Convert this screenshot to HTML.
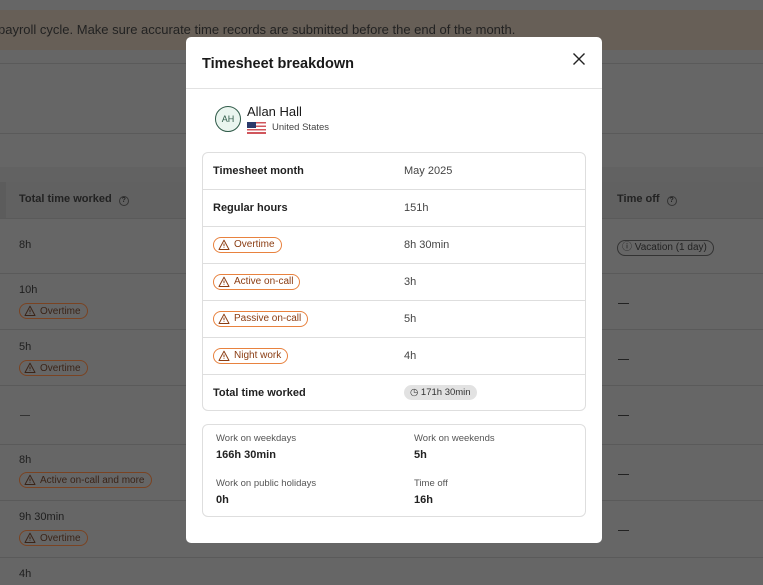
<!DOCTYPE html>
<html><head><meta charset="utf-8"><style>
*{box-sizing:border-box;margin:0;padding:0}
body{width:763px;height:585px;overflow:hidden;background:#666;font-family:"Liberation Sans",sans-serif;position:relative;color:#1a1a1a}
.abs{position:absolute}
.line{position:absolute;left:0;width:763px;height:1px;background:#5a5a5a}
.bg{color:#1e1e1e;font-size:11px}
.badge{display:inline-flex;align-items:center;gap:4px;border:1px solid #e8823f;border-radius:9px;height:16px;line-height:14px;padding:1px 6px 0 4px;font-size:10px;font-weight:normal;color:#8a3c12;background:#fff;white-space:nowrap}
.badge svg{flex:none;margin-top:-1px}
.bbg{background:transparent;border-color:#7a4322;color:#3a2418}
.modal{position:absolute;left:186px;top:37px;width:416px;height:506px;background:#fff;border-radius:5px}
.tbl{position:absolute;left:16px;top:115px;width:384px;border:1px solid #dedede;border-radius:6px}
.row{height:37px;border-top:1px solid #dedede;display:flex;align-items:center;font-size:11px}
.row:first-child{border-top:none;height:36px}
.row .l{width:201px;padding-left:10px;font-weight:bold;color:#222}
.row .v{color:#444}
.sum{position:absolute;left:16px;top:387px;width:384px;height:93px;border:1px solid #dedede;border-radius:6px;font-size:9.5px}
.sum .lab{position:absolute;color:#555}
.sum .val{position:absolute;font-weight:bold;font-size:11px;color:#222}
</style></head><body>
<svg width="0" height="0" style="position:absolute"><defs><symbol id="w" viewBox="0 0 12 12"><path d="M6 1.2L11 10.5H1Z" fill="none" stroke="currentColor" stroke-width="1" stroke-linejoin="round"/><path d="M6 4.5V7.3M6 8.4V9" stroke="currentColor" stroke-width="1"/></symbol></defs></svg>
<div class="abs" style="left:0;top:10px;width:763px;height:40px;background:#675f57"></div>
<div class="abs bg" style="left:-2px;top:22px;font-size:13px;color:#222">payroll cycle. Make sure accurate time records are submitted before the end of the month.</div>
<div class="line" style="top:63px"></div>
<div class="line" style="top:133px"></div>
<div class="abs" style="left:0;top:167px;width:763px;height:15px;background:#626262"></div>
<div class="abs" style="left:0;top:182px;width:763px;height:36px;background:#616161"></div>
<div class="abs" style="left:0;top:182px;width:6px;height:36px;background:#5c5c5c"></div>
<div class="line" style="top:218px"></div>
<div class="abs bg" style="left:19px;top:193px;font-weight:bold;color:#222">Total time worked <span style="display:inline-block;width:10px;height:10px;border:1px solid #333;border-radius:50%;font-size:7px;text-align:center;line-height:8px;margin-left:4px">?</span></div>
<div class="abs bg" style="left:617px;top:193px;font-weight:bold;color:#222">Time off <span style="display:inline-block;width:10px;height:10px;border:1px solid #333;border-radius:50%;font-size:7px;text-align:center;line-height:8px;margin-left:4px">?</span></div>
<div class="line" style="top:273px"></div><div class="line" style="top:329px"></div><div class="line" style="top:385px"></div><div class="line" style="top:444px"></div><div class="line" style="top:500px"></div><div class="line" style="top:557px"></div>
<div class="abs bg" style="left:19px;top:239px">8h</div>
<div class="abs bg" style="left:19px;top:284px">10h</div>
<div class="abs" style="left:19px;top:303px"><span class="badge bbg"><svg width="12" height="12"><use href="#w"/></svg>Overtime</span></div>
<div class="abs bg" style="left:19px;top:341px">5h</div>
<div class="abs" style="left:19px;top:360px"><span class="badge bbg"><svg width="12" height="12"><use href="#w"/></svg>Overtime</span></div>
<div class="abs" style="left:20px;top:415px;width:10px;height:1px;background:#333"></div>
<div class="abs bg" style="left:19px;top:454px">8h</div>
<div class="abs" style="left:19px;top:472px"><span class="badge bbg"><svg width="12" height="12"><use href="#w"/></svg>Active on-call and more</span></div>
<div class="abs bg" style="left:19px;top:511px">9h 30min</div>
<div class="abs" style="left:19px;top:530px"><span class="badge bbg"><svg width="12" height="12"><use href="#w"/></svg>Overtime</span></div>
<div class="abs bg" style="left:19px;top:568px">4h</div>
<div class="abs" style="left:617px;top:237px"><span class="badge bbg" style="border-color:#333;color:#222">ⓘ Vacation (1 day)</span></div>
<div class="abs" style="left:618px;top:303px;width:11px;height:1px;background:#222"></div>
<div class="abs" style="left:618px;top:359px;width:11px;height:1px;background:#222"></div>
<div class="abs" style="left:618px;top:415px;width:11px;height:1px;background:#222"></div>
<div class="abs" style="left:618px;top:474px;width:11px;height:1px;background:#222"></div>
<div class="abs" style="left:618px;top:530px;width:11px;height:1px;background:#222"></div>

<div class="modal">
 <div class="abs" style="left:16px;top:19px;font-size:14.5px;font-weight:bold;color:#1a1a1a">Timesheet breakdown</div>
 <svg class="abs" style="left:387px;top:16px" width="12" height="12" viewBox="0 0 12 12"><path d="M0.5 0.5L11.5 11.5M11.5 0.5L0.5 11.5" stroke="#222" stroke-width="1.4"/></svg>
 <div class="abs" style="left:0;top:51px;width:416px;height:1px;background:#e2e2e2"></div>
 <div class="abs" style="left:29px;top:69px;width:26px;height:26px;border:1px solid #2f5a48;border-radius:50%;background:#eaf5ef;font-size:9px;color:#2f5a48;text-align:center;line-height:24px">AH</div>
 <div class="abs" style="left:61px;top:67px;font-size:13px;color:#1a1a1a">Allan Hall</div>
 <div class="abs" style="left:61px;top:85px;width:19px;height:12px;background:repeating-linear-gradient(#d0565c 0 1.7px,#fff 1.7px 3.4px)"><div style="width:9px;height:6px;background:#2b3a6b"></div></div>
 <div class="abs" style="left:86px;top:85px;font-size:9.5px;color:#444">United States</div>
 <div class="tbl">
  <div class="row"><div class="l">Timesheet month</div><div class="v">May 2025</div></div>
  <div class="row"><div class="l">Regular hours</div><div class="v">151h</div></div>
  <div class="row"><div class="l"><span class="badge"><svg width="12" height="12"><use href="#w"/></svg>Overtime</span></div><div class="v">8h 30min</div></div>
  <div class="row"><div class="l"><span class="badge"><svg width="12" height="12"><use href="#w"/></svg>Active on-call</span></div><div class="v">3h</div></div>
  <div class="row"><div class="l"><span class="badge"><svg width="12" height="12"><use href="#w"/></svg>Passive on-call</span></div><div class="v">5h</div></div>
  <div class="row"><div class="l"><span class="badge"><svg width="12" height="12"><use href="#w"/></svg>Night work</span></div><div class="v">4h</div></div>
  <div class="row" style="height:36px"><div class="l">Total time worked</div><div class="v"><span style="display:inline-block;background:#e2e2e2;border-radius:8px;padding:2px 6px;font-size:9.5px;color:#333">◷ 171h 30min</span></div></div>
 </div>
 <div class="sum">
  <div class="lab" style="left:13px;top:8px">Work on weekdays</div>
  <div class="val" style="left:13px;top:24px">166h 30min</div>
  <div class="lab" style="left:211px;top:8px">Work on weekends</div>
  <div class="val" style="left:211px;top:24px">5h</div>
  <div class="lab" style="left:13px;top:53px">Work on public holidays</div>
  <div class="val" style="left:13px;top:69px">0h</div>
  <div class="lab" style="left:211px;top:53px">Time off</div>
  <div class="val" style="left:211px;top:69px">16h</div>
 </div>
</div>
</body></html>
